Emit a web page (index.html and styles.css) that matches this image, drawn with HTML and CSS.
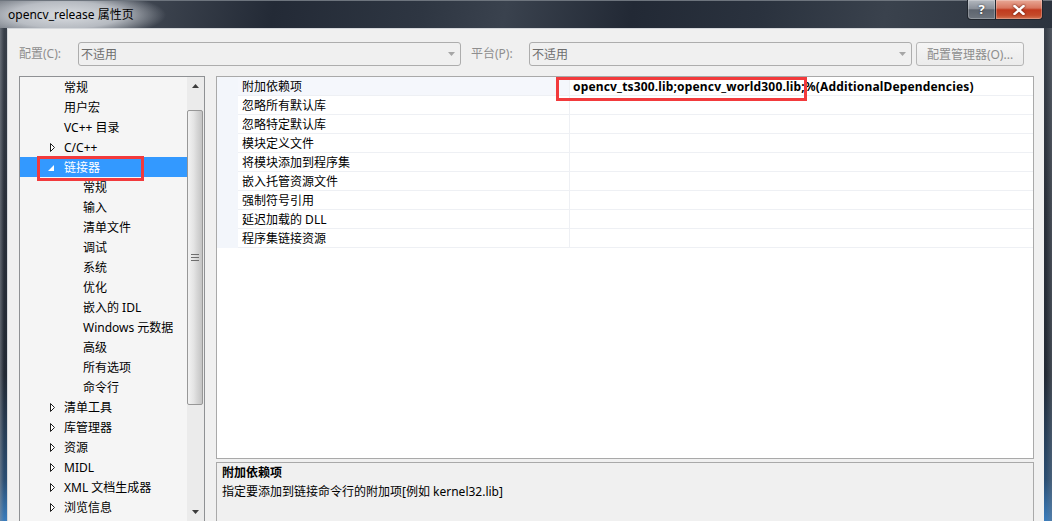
FILE: index.html
```html
<!DOCTYPE html>
<html lang="zh-CN">
<head>
<meta charset="utf-8">
<title>opencv_release 属性页</title>
<link rel="stylesheet" href="styles.css">
</head>
<body>
<div class="window">
  <div class="titlebar">
    <div class="title">opencv_release 属性页</div>
    <div class="caption">
      <div class="cap-btn help">?</div>
      <div class="cap-btn close">
        <svg width="12" height="10" viewBox="0 0 12 10"><path d="M1.5 1 L10.5 9 M10.5 1 L1.5 9" stroke="#fff" stroke-width="2.4" stroke-linecap="square"/></svg>
      </div>
    </div>
  </div>
  <div class="client">
    <div class="config-row">
      <span class="lbl lbl-config">配置(C):</span>
      <div class="combo"><span>不适用</span><svg class="combo-arrow" width="7" height="4" viewBox="0 0 7 4"><path d="M0 0 H7 L3.5 4 Z" fill="#a6a6a6"/></svg></div>
      <span class="lbl lbl-platform">平台(P):</span>
      <div class="combo"><span>不适用</span><svg class="combo-arrow" width="7" height="4" viewBox="0 0 7 4"><path d="M0 0 H7 L3.5 4 Z" fill="#a6a6a6"/></svg></div>
      <div class="btn">配置管理器(O)...</div>
    </div>
    <div class="main">
      <div class="tree">
        <div class="tree-list">
          <div class="trow l1"><span class="ico"></span>常规</div>
          <div class="trow l1"><span class="ico"></span>用户宏</div>
          <div class="trow l1"><span class="ico"></span>VC++ 目录</div>
          <div class="trow l1"><span class="ico"><svg width="6" height="9" viewBox="0 0 6 9"><path d="M0.5 0.5 L4.5 4.5 L0.5 8.5 Z" fill="#fff" stroke="#1e1e1e"/></svg></span>C/C++</div>
          <div class="trow l1 sel"><span class="ico"><svg width="6" height="6" viewBox="0 0 6 6"><path d="M6 0 L6 6 L0 6 Z" fill="#fff"/></svg></span>链接器</div>
          <div class="trow l2">常规</div>
          <div class="trow l2">输入</div>
          <div class="trow l2">清单文件</div>
          <div class="trow l2">调试</div>
          <div class="trow l2">系统</div>
          <div class="trow l2">优化</div>
          <div class="trow l2">嵌入的 IDL</div>
          <div class="trow l2">Windows 元数据</div>
          <div class="trow l2">高级</div>
          <div class="trow l2">所有选项</div>
          <div class="trow l2">命令行</div>
          <div class="trow l1"><span class="ico"><svg width="6" height="9" viewBox="0 0 6 9"><path d="M0.5 0.5 L4.5 4.5 L0.5 8.5 Z" fill="#fff" stroke="#1e1e1e"/></svg></span>清单工具</div>
          <div class="trow l1"><span class="ico"><svg width="6" height="9" viewBox="0 0 6 9"><path d="M0.5 0.5 L4.5 4.5 L0.5 8.5 Z" fill="#fff" stroke="#1e1e1e"/></svg></span>库管理器</div>
          <div class="trow l1"><span class="ico"><svg width="6" height="9" viewBox="0 0 6 9"><path d="M0.5 0.5 L4.5 4.5 L0.5 8.5 Z" fill="#fff" stroke="#1e1e1e"/></svg></span>资源</div>
          <div class="trow l1"><span class="ico"><svg width="6" height="9" viewBox="0 0 6 9"><path d="M0.5 0.5 L4.5 4.5 L0.5 8.5 Z" fill="#fff" stroke="#1e1e1e"/></svg></span>MIDL</div>
          <div class="trow l1"><span class="ico"><svg width="6" height="9" viewBox="0 0 6 9"><path d="M0.5 0.5 L4.5 4.5 L0.5 8.5 Z" fill="#fff" stroke="#1e1e1e"/></svg></span>XML 文档生成器</div>
          <div class="trow l1"><span class="ico"><svg width="6" height="9" viewBox="0 0 6 9"><path d="M0.5 0.5 L4.5 4.5 L0.5 8.5 Z" fill="#fff" stroke="#1e1e1e"/></svg></span>浏览信息</div>
        </div>
        <div class="vscroll">
          <div class="sb-btn"><svg width="7" height="4" viewBox="0 0 7 4"><path d="M3.5 0 L7 4 H0 Z" fill="#3c3c3c"/></svg></div>
          <div class="thumb">
            <svg width="8" height="7" viewBox="0 0 8 7"><path d="M0 0.5 H8 M0 3.5 H8 M0 6.5 H8" stroke="#6e6e6e"/></svg>
          </div>
          <div class="sb-btn down"><svg width="7" height="4" viewBox="0 0 7 4"><path d="M0 0 H7 L3.5 4 Z" fill="#3c3c3c"/></svg></div>
        </div>
      </div>
      <div class="right">
        <div class="grid">
          <div class="prow first"><span class="gut"></span><span class="pname">附加依赖项</span><span class="pval">opencv_ts300.lib;opencv_world300.lib;%(AdditionalDependencies)</span></div>
          <div class="prow"><span class="gut"></span><span class="pname">忽略所有默认库</span><span class="pval"></span></div>
          <div class="prow"><span class="gut"></span><span class="pname">忽略特定默认库</span><span class="pval"></span></div>
          <div class="prow"><span class="gut"></span><span class="pname">模块定义文件</span><span class="pval"></span></div>
          <div class="prow"><span class="gut"></span><span class="pname">将模块添加到程序集</span><span class="pval"></span></div>
          <div class="prow"><span class="gut"></span><span class="pname">嵌入托管资源文件</span><span class="pval"></span></div>
          <div class="prow"><span class="gut"></span><span class="pname">强制符号引用</span><span class="pval"></span></div>
          <div class="prow"><span class="gut"></span><span class="pname">延迟加载的 DLL</span><span class="pval"></span></div>
          <div class="prow"><span class="gut"></span><span class="pname">程序集链接资源</span><span class="pval"></span></div>
        </div>
        <div class="desc">
          <div class="desc-title">附加依赖项</div>
          <div class="desc-text">指定要添加到链接命令行的附加项[例如 kernel32.lib]</div>
        </div>
      </div>
    </div>
  </div>
  <div class="mark mark-tree"></div>
  <div class="mark mark-value"></div>
</div>
</body>
</html>
```

FILE: styles.css
```css
html, body {
  margin: 0;
  padding: 0;
  background: #2a303a;
}

.window {
  position: relative;
  width: 1052px;
  height: 521px;
  overflow: hidden;
  box-sizing: border-box;
  padding: 0 8px 0 7px;
  display: flex;
  flex-direction: column;
  font-family: "Noto Sans", "Noto Sans CJK SC", sans-serif;
  font-size: 12px;
  color: #000;
  background:
    linear-gradient(90deg, rgba(140,146,154,0.55) 0px, rgba(60,66,74,0) 4px, rgba(0,0,0,0) 1046px, rgba(120,126,134,0.4) 1052px),
    linear-gradient(180deg, #3b424c 0%, #2a303a 40%, #232a34 72%, #2b4e72 92%, #3a7dbd 100%);
}

/* ---------- title bar ---------- */
.titlebar {
  flex: none;
  height: 28px;
  margin: 0 -8px 0 -7px;
  display: flex;
  align-items: flex-start;
  background:
    radial-gradient(ellipse 100px 24px at 66px 14px, rgba(222,225,229,0.97) 0%, rgba(200,204,210,0.85) 55%, rgba(150,156,165,0) 100%),
    linear-gradient(100deg, #6a7079 0%, #3e4550 14%, #232a36 26%, #2e3642 40%, #3a424e 48%, #222935 60%, #2a323e 72%, #3a424d 84%, #2c333e 100%);
  border-top: 1px solid #6d747d;
  box-sizing: border-box;
}

.title {
  padding: 5px 0 0 8px;
  line-height: 18px;
  font-size: 12px;
  color: #000;
}

.caption {
  margin-left: auto;
  margin-right: 9px;
  margin-top: -1px;
  display: flex;
}

.cap-btn {
  box-sizing: border-box;
  height: 20px;
  display: flex;
  align-items: center;
  justify-content: center;
  border: 1px solid #20262e;
  border-top: none;
  box-shadow: inset 0 0 0 1px rgba(255,255,255,0.25);
}

.help {
  width: 29px;
  border-radius: 0 0 0 4px;
  background: linear-gradient(180deg, #b3b8bf 0%, #8a9099 45%, #5e656f 52%, #6e757e 100%);
  color: #fff;
  font-weight: bold;
  font-size: 13px;
  line-height: 1;
  text-shadow: 0 0 2px #222;
}

.close {
  width: 47px;
  border-left: none;
  border-radius: 0 0 4px 0;
  background: linear-gradient(180deg, #e8a896 0%, #d8765f 42%, #c13a1e 52%, #c44a2a 80%, #d47352 100%);
}

.close svg {
  filter: drop-shadow(0 0 1px #5a1206);
}

/* ---------- client ---------- */
.client {
  flex: 1;
  min-height: 0;
  background: #f0f0f0;
  border-top: 1px solid #d4d7db;
  border-left: 1px solid #d4d7db;
  padding: 13px 10px 0 11px;
  display: flex;
  flex-direction: column;
}

.config-row {
  flex: none;
  display: flex;
  align-items: center;
  height: 24px;
}

.lbl {
  color: #8e8e8e;
  line-height: 24px;
}

.lbl-config {
  width: 59px;
}

.lbl-platform {
  width: 58px;
  margin-left: 10px;
}

.combo {
  box-sizing: border-box;
  width: 383px;
  height: 24px;
  border: 1px solid #adadad;
  border-radius: 3px;
  background: #f0f0f0;
  display: flex;
  align-items: center;
  padding: 0 5px 0 2px;
  color: #6d6d6d;
}

.combo span {
  flex: 1;
}

.combo-arrow {
  flex: none;
}

.btn {
  box-sizing: border-box;
  width: 108px;
  height: 24px;
  margin-left: 4px;
  border: 1px solid #b6b6b6;
  border-radius: 3px;
  background: linear-gradient(180deg, #f5f5f5, #ebebeb);
  color: #8d8d8d;
  display: flex;
  align-items: center;
  justify-content: center;
}

.main {
  flex: 1;
  min-height: 0;
  margin-top: 10px;
  display: flex;
  gap: 11px;
  align-items: flex-start;
}

/* ---------- tree ---------- */
.tree {
  flex: none;
  box-sizing: border-box;
  width: 186px;
  height: 446px;
  border: 1px solid #8f9194;
  background: #f5f5f5;
  display: flex;
}

.tree-list {
  flex: 1;
}

.trow {
  box-sizing: border-box;
  height: 20px;
  padding-top: 2px;
  line-height: 18px;
  display: flex;
  align-items: center;
  white-space: nowrap;
  color: #000;
}

.trow.l1 {
  padding-left: 28px;
}

.trow.l2 {
  padding-left: 63px;
}

.ico {
  width: 16px;
  height: 18px;
  margin-top: -2px;
  flex: none;
  display: flex;
  align-items: center;
  padding-left: 2px;
  box-sizing: border-box;
}

.trow.sel {
  background: #3399ff;
  color: #fff;
}

.trow.sel .ico {
  padding-left: 0;
  align-items: flex-start;
  padding-top: 7px;
}

.vscroll {
  flex: none;
  width: 17px;
  background: #ebebeb;
  display: flex;
  flex-direction: column;
  align-items: center;
}

.sb-btn {
  width: 17px;
  height: 17px;
  display: flex;
  align-items: center;
  justify-content: center;
  flex: none;
}

.sb-btn.down {
  margin-top: auto;
  margin-bottom: 1px;
}

.thumb {
  box-sizing: border-box;
  width: 16px;
  height: 295px;
  margin-top: 16px;
  align-self: flex-start;
  border: 1px solid #979797;
  border-radius: 2px;
  background: linear-gradient(90deg, #f2f2f2 0%, #e4e4e4 40%, #d3d3d3 70%, #c4c4c4 100%);
  display: flex;
  align-items: center;
  justify-content: center;
}

/* ---------- property grid ---------- */
.right {
  flex: none;
  width: 818px;
  display: flex;
  flex-direction: column;
  gap: 3px;
}

.grid {
  box-sizing: border-box;
  height: 383px;
  border: 1px solid #a9a9a9;
  background: #fff;
}

.prow {
  display: grid;
  grid-template-columns: 21px 332px 1fr;
  height: 19px;
}

.gut {
  background: #f3f6fb;
}

.pname {
  box-sizing: border-box;
  padding-left: 4px;
  padding-top: 1px;
  line-height: 17px;
  border-bottom: 1px solid #eef0f4;
  border-right: 1px solid #eef0f4;
  white-space: nowrap;
}

.prow.first .pname {
  background: #f5f7fc;
}

.pval {
  box-sizing: border-box;
  padding-left: 3px;
  padding-top: 1px;
  line-height: 17px;
  border-bottom: 1px solid #eef0f4;
  font-weight: bold;
  letter-spacing: 0.16px;
  white-space: nowrap;
  overflow: hidden;
}

.desc {
  box-sizing: border-box;
  height: 70px;
  border: 1px solid #a9a9a9;
  background: #f0f0f0;
  padding: 0 0 0 5px;
}

.desc-title {
  font-weight: bold;
  line-height: 19px;
}

.desc-text {
  line-height: 19px;
}

/* ---------- annotation marks ---------- */
.mark {
  position: absolute;
  box-sizing: border-box;
  border: 3px solid #f23a3c;
}

.mark-tree {
  left: 37px;
  top: 156px;
  width: 107px;
  height: 25px;
}

.mark-value {
  left: 556px;
  top: 77px;
  width: 251px;
  height: 24px;
}
```
